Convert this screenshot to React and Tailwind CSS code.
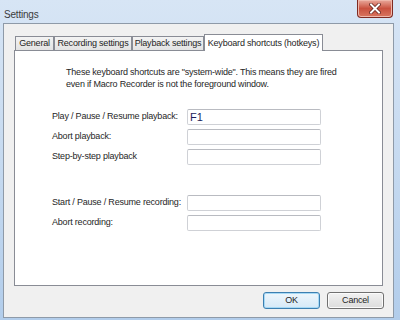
import React from 'react';

const font = { fontFamily: '"Liberation Sans", Arial, sans-serif' };

const Tab = ({ label, width, active }) => (
    <div
        className={
            active
                ? 'relative z-10 -mb-px flex h-[17px] items-start justify-center border border-b-0 border-[#898c95] bg-white pt-[2px] text-[9px] tracking-[-0.2px] text-[#1e1e1e]'
                : 'flex h-[14px] items-center justify-center border border-b-0 border-[#898c95] bg-gradient-to-b from-[#f3f3f3] to-[#e3e3e3] text-[9px] tracking-[-0.2px] text-[#1e1e1e]'
        }
        style={{ width }}
    >
        {label}
    </div>
);

const Field = ({ label, value }) => (
    <div className="flex h-[16px] items-center">
        <div className="w-[135px] text-[9px] tracking-[-0.2px] text-[#262626]">{label}</div>
        <div className="flex h-[16px] w-[134px] items-center rounded-[2px] border border-[#cfd1d6] border-t-[#b9bbc1] bg-white pl-[2px] text-[11px] leading-none text-[#1c1c5a]">
            {value}
        </div>
    </div>
);

const Button = ({ children, primary }) => (
    <button
        className={
            'flex h-[17px] w-[57px] items-center justify-center rounded-[3px] border bg-gradient-to-b text-[9px] tracking-[-0.2px] text-[#1e1e1e] ' +
            (primary
                ? 'border-[#3c7fb1] from-[#eef6fc] to-[#d6e9f7] shadow-[inset_0_0_0_1px_#a7d9f5]'
                : 'border-[#707070] from-[#f2f2f2] to-[#dcdcdc] shadow-[inset_0_0_0_1px_#fbfbfb]')
        }
    >
        {children}
    </button>
);

export default function App() {
    return (
        <div
            className="flex h-[320px] w-[400px] flex-col bg-gradient-to-b from-[#d7e5f5] via-[#c6daf0] to-[#b2cdeb]"
            style={font}
        >
            {/* title bar */}
            <div className="flex h-[23px] shrink-0 items-start justify-between">
                <div className="pl-[4px] pt-[7px] text-[10px] tracking-[-0.2px] text-[#3c3c3c]">Settings</div>
                <div className="mr-[7px] flex h-[18px] w-[36px] items-center justify-center rounded-b-[4px] border border-t-0 border-[#7f2b22] bg-gradient-to-b from-[#e8a89c] via-[#c9513f] to-[#d9755f] shadow-[inset_0_0_0_1px_#efb7aa]">
                    <svg width="12" height="11" viewBox="0 0 12 11">
                        <path d="M2 1.5 L10 9.5 M10 1.5 L2 9.5" stroke="#5a1a14" strokeWidth="3.4" strokeLinecap="square" />
                        <path d="M2 1.5 L10 9.5 M10 1.5 L2 9.5" stroke="#ffffff" strokeWidth="2" strokeLinecap="square" />
                    </svg>
                </div>
            </div>

            {/* client area */}
            <div className="mb-[2px] ml-[3px] flex w-[391px] flex-1 flex-col border border-[#8e9aa8] bg-[#f0f0f0] pl-[10px] pt-[10px]">
                <div className="flex h-[16px] items-end pl-[1px]">
                    <Tab label="General" width={39} />
                    <Tab label="Recording settings" width={78} />
                    <Tab label="Playback settings" width={72} />
                    <Tab label="Keyboard shortcuts (hotkeys)" width={119} active />
                </div>
                <div className="h-[236px] w-[369px] border border-[#898c95] bg-white pl-[37px] pt-[15px]">
                    <div className="pl-[14px] text-[9px] leading-[12px] tracking-[-0.2px] text-[#262626]">
                        <div>These keyboard shortcuts are "system-wide". This means they are fired</div>
                        <div>even if Macro Recorder is not the foreground window.</div>
                    </div>
                    <div className="mt-[19px] flex flex-col gap-[4px]">
                        <Field label="Play / Pause / Resume playback:" value="F1" />
                        <Field label="Abort playback:" />
                        <Field label="Step-by-step playback" />
                    </div>
                    <div className="mt-[30px] flex flex-col gap-[4px]">
                        <Field label="Start / Pause / Resume recording:" />
                        <Field label="Abort recording:" />
                    </div>
                </div>
                <div className="mt-[6px] flex w-[370px] justify-end gap-[7px]">
                    <Button primary>OK</Button>
                    <Button>Cancel</Button>
                </div>
            </div>
        </div>
    );
}
